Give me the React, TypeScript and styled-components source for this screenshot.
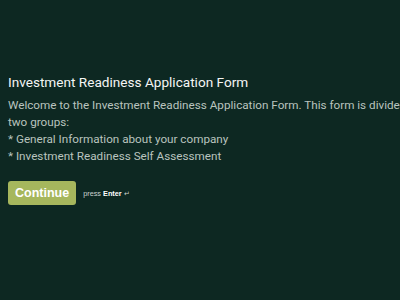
import styled, { createGlobalStyle } from 'styled-components'

const Global = createGlobalStyle`
  html, body {
    margin: 0;
    padding: 0;
    background: #0d2822;
    overflow: hidden;
  }
  body {
    font-family: Roboto, "Liberation Sans", Arial, sans-serif;
  }
`

const Page = styled.div`
  width: 400px;
  height: 300px;
  background: #0d2822;
  padding: 72px 0 0 8px;
  box-sizing: border-box;
  overflow: hidden;
`

const Content = styled.div`
  width: 460px;
`

const Title = styled.h1`
  margin: 0 0 5px;
  font-size: 13.6px;
  font-weight: 400;
  color: #f4f6f5;
  line-height: 20px;
`

const Line = styled.div`
  font-size: 11.7px;
  line-height: 17px;
  color: #b9c4bf;
  white-space: nowrap;
`

const Actions = styled.div`
  display: flex;
  align-items: center;
  gap: 7px;
  margin-top: 16px;
`

const Button = styled.button`
  border: 0;
  border-radius: 3px;
  background: #a6b75d;
  color: #ffffff;
  font-family: "Liberation Sans", Arial, sans-serif;
  font-weight: 700;
  font-size: 12.5px;
  height: 24px;
  padding: 0 7px;
  cursor: pointer;
`

const Hint = styled.span`
  font-family: "Liberation Sans", Arial, sans-serif;
  font-size: 7.3px;
  color: #c9d1cd;
  b {
    color: #ffffff;
  }
`

export default function App() {
  return (
    <>
      <Global />
      <Page>
        <Content>
          <Title>Investment Readiness Application Form</Title>
          <Line>Welcome to the Investment Readiness Application Form. This form is divided into</Line>
          <Line>two groups:</Line>
          <Line>* General Information about your company</Line>
          <Line>* Investment Readiness Self Assessment</Line>
          <Actions>
            <Button>Continue</Button>
            <Hint>
              press <b>Enter</b> ↵
            </Hint>
          </Actions>
        </Content>
      </Page>
    </>
  )
}
